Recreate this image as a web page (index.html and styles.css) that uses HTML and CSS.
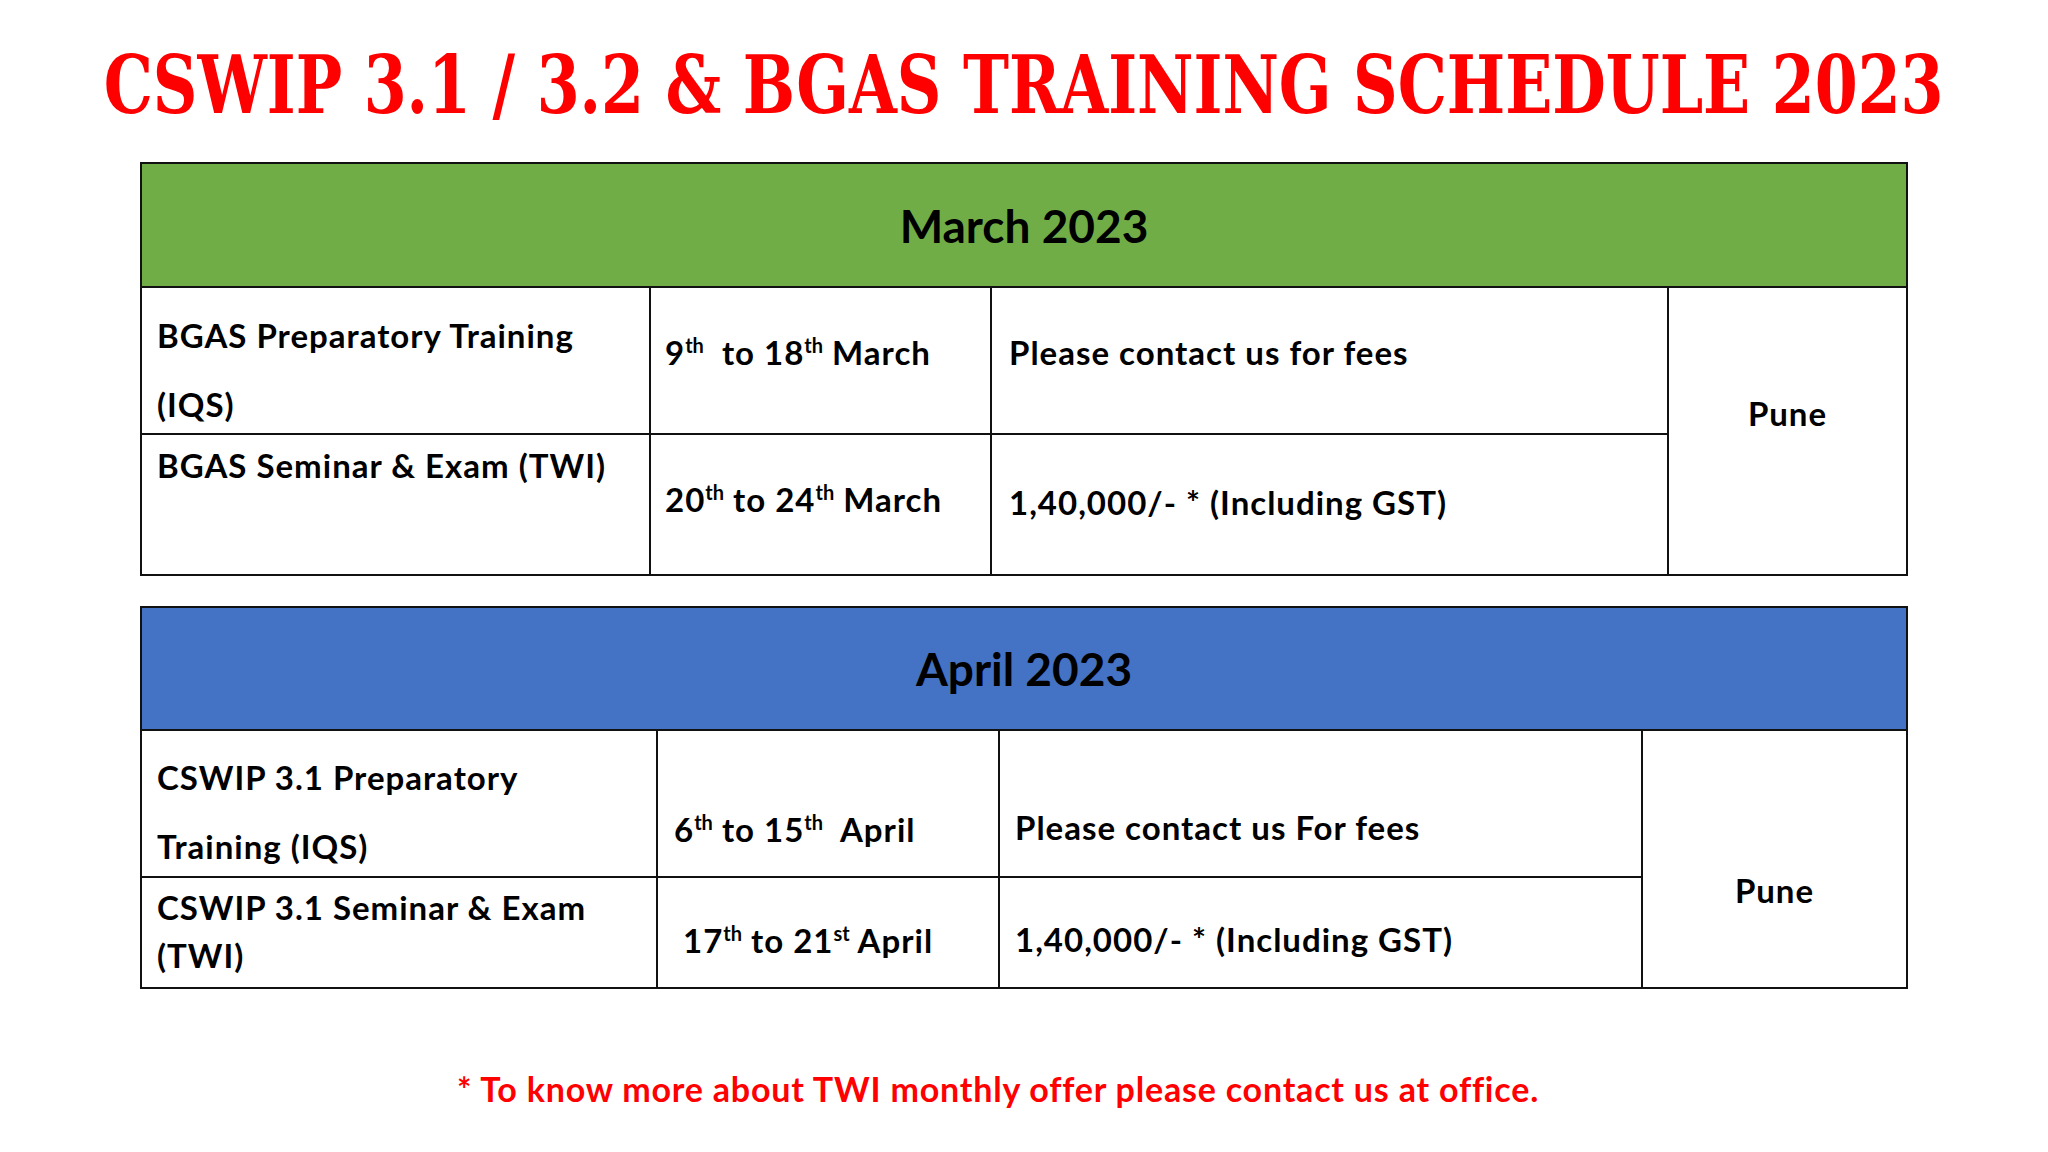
FILE: index.html
```html
<!DOCTYPE html>
<html lang="en">
<head>
<meta charset="utf-8">
<title>CSWIP 3.1 / 3.2 &amp; BGAS Training Schedule 2023</title>
<link rel="stylesheet" href="styles.css">
</head>
<body>
<div class="page">
  <h1 class="title"><span class="title-text">CSWIP 3.1 / 3.2 &amp; BGAS TRAINING SCHEDULE 2023</span></h1>

  <section class="sched sched-march">
    <div class="head head-green">March 2023</div>
    <div class="cell c-course p-r1c1 two">BGAS Preparatory Training<br>(IQS)</div>
    <div class="cell c-date p-45">9<sup class="ord">th</sup>&nbsp; to 18<sup class="ord">th</sup> March</div>
    <div class="cell c-fee p-45">Please contact us for fees</div>
    <div class="cell place p-pune1">Pune</div>
    <div class="cell c-course p-11">BGAS Seminar &amp; Exam (TWI)</div>
    <div class="cell c-date p-45">20<sup class="ord">th</sup> to 24<sup class="ord">th</sup> March</div>
    <div class="cell c-fee p-48">1,40,000/- * (Including GST)</div>
  </section>

  <section class="sched sched-april">
    <div class="head head-blue">April 2023</div>
    <div class="cell c-course p-13 two">CSWIP 3.1 Preparatory<br>Training (IQS)</div>
    <div class="cell c-date2 p-79">6<sup class="ord">th</sup> to 15<sup class="ord">th</sup>&nbsp; April</div>
    <div class="cell c-fee2 p-77">Please contact us For fees</div>
    <div class="cell place p-pune2">Pune</div>
    <div class="cell c-course p-6 mid">CSWIP 3.1 Seminar &amp; Exam<br>(TWI)</div>
    <div class="cell c-date3 p-43">17<sup class="ord">th</sup> to 21<sup class="ord">st</sup> April</div>
    <div class="cell c-fee2 p-42">1,40,000/- * (Including GST)</div>
  </section>

  <p class="note">* To know more about TWI monthly offer please contact us at office.</p>
</div>
</body>
</html>
```

FILE: styles.css
```css
html, body {
  margin: 0;
  padding: 0;
  background: #ffffff;
}

.page {
  width: 2048px;
  height: 1152px;
  overflow: hidden;
  font-family: "Lato", "Open Sans", sans-serif;
  font-weight: 700;
  color: #000;
}

.title {
  margin: 35px 0 0 0;
  height: 100px;
  line-height: 100px;
  display: flex;
  justify-content: center;
  font-family: "DejaVu Serif", "Liberation Serif", serif;
  font-weight: 700;
  font-size: 80px;
  color: #ff0000;
  white-space: nowrap;
}

.title-text {
  display: block;
  flex: none;
  transform: scaleX(0.772);
  transform-origin: center;
}

.sched {
  display: grid;
  width: max-content;
  margin-left: 140px;
  gap: 2px;
  padding: 2px;
  background: #111;
  font-size: 33px;
  letter-spacing: 1px;
}

.sched-march {
  margin-top: 27px;
  grid-template-columns: 507px 339px 675px 237px;
  grid-template-rows: 122px 145px 139px;
}

.sched-april {
  margin-top: 30px;
  grid-template-columns: 514px 340px 641px 263px;
  grid-template-rows: 121px 145px 109px;
}

.head {
  grid-column: 1 / -1;
  display: flex;
  align-items: center;
  justify-content: center;
  font-size: 46px;
  letter-spacing: 0;
  color: #000;
}

.head-green { background: #70ad47; }
.head-blue { background: #4472c4; }

.cell {
  background: #fff;
  line-height: 40px;
  white-space: nowrap;
  box-sizing: border-box;
}

.two { line-height: 69px; }
.mid { line-height: 48px; }

.c-course { padding-left: 15px; }
.c-date { padding-left: 14px; }
.c-fee { padding-left: 17px; }
.c-date2 { padding-left: 16px; }
.c-date3 { padding-left: 25px; }
.c-fee2 { padding-left: 15px; }

.place {
  grid-column: 4;
  grid-row: 2 / 4;
  text-align: center;
}

.p-r1c1 { padding-top: 13px; }
.p-45 { padding-top: 44px; }
.p-48 { padding-top: 47px; }
.p-11 { padding-top: 10px; }
.p-13 { padding-top: 12px; }
.p-79 { padding-top: 78px; }
.p-77 { padding-top: 76px; }
.p-6 { padding-top: 5px; }
.p-43 { padding-top: 42px; }
.p-42 { padding-top: 41px; }
.p-pune1 { padding-top: 105px; }
.p-pune2 { padding-top: 139px; }

.ord {
  font-size: 20px;
  letter-spacing: 0;
  line-height: 0;
  vertical-align: 12px;
}

.note {
  margin: 80px 0 0 0;
  padding-right: 52px;
  text-align: center;
  font-size: 34px;
  letter-spacing: 0.8px;
  line-height: 40px;
  color: #ff0000;
  white-space: nowrap;
}
```
